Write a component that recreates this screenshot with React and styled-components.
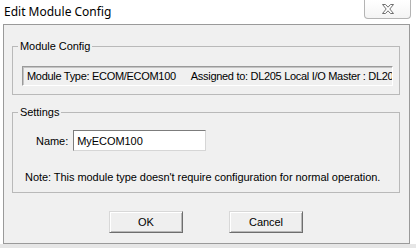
import React from "react";
import styled, { createGlobalStyle } from "styled-components";

const Global = createGlobalStyle`
  html, body {
    margin: 0;
    padding: 0;
    background: #ffffff;
  }
  * {
    box-sizing: border-box;
  }
`;

const Frame = styled.div`
  width: 416px;
  height: 248px;
  display: flex;
  flex-direction: column;
  background: #ffffff;
  border-bottom: 4px solid #e6e6e6;
  font-family: "Liberation Sans", Arial, sans-serif;
  font-size: 11px;
  letter-spacing: -0.05px;
  color: #000;
  overflow: hidden;
`;

const TitleBar = styled.div`
  height: 24px;
  flex: none;
  display: flex;
  align-items: flex-start;
  padding-left: 4px;
`;

const Title = styled.div`
  font-family: "Noto Sans", "Open Sans", sans-serif;
  font-size: 12px;
  letter-spacing: 0;
  line-height: 14px;
  padding-top: 5px;
  color: #000;
`;

const CloseButton = styled.div`
  margin-left: auto;
  margin-right: 5px;
  width: 47px;
  height: 19px;
  border: 1px solid #b4b4b4;
  border-top: none;
  border-radius: 0 0 4px 4px;
  background: linear-gradient(#ffffff, #f4f4f4);
  display: flex;
  align-items: center;
  justify-content: center;
`;

const Client = styled.div`
  flex: 1;
  margin: 0 6px 0 3px;
  background: #f0f0f0;
  border: 1px solid #9a9a9a;
  padding: 15px 9px 0 8px;
  display: flex;
  flex-direction: column;
`;

const Group = styled.fieldset`
  margin: 0 0 ${({ $gap }) => $gap || 0}px 0;
  padding: 0;
  border: 1px solid #b9b9b9;
  min-width: 0;
`;

const Legend = styled.legend`
  margin-left: 5px;
  padding: 0 2px;
  line-height: 13px;
`;

const GroupBody = styled.div`
  padding: ${({ $pad }) => $pad};
  display: flex;
  flex-direction: column;
`;

const StaticBox = styled.div`
  height: 20px;
  border: 1px solid;
  border-color: #9a9a9a #ffffff #ffffff #9a9a9a;
  box-shadow: inset 1px 1px 0 #c4c4c4;
  padding: 0 0 0 4px;
  display: flex;
  align-items: center;
  gap: 15px;
  white-space: pre;
  overflow: hidden;
  letter-spacing: -0.3px;
`;

const FieldRow = styled.div`
  display: flex;
  align-items: center;
  gap: 5px;
  padding-left: 23px;
`;

const TextInput = styled.input`
  width: 133px;
  height: 21px;
  margin: 0;
  padding: 0 0 0 3px;
  border: 1px solid;
  border-color: #7c7c7c #d6d6d6 #d6d6d6 #7c7c7c;
  background: #ffffff;
  font-family: inherit;
  font-size: 11px;
  letter-spacing: inherit;
  color: #000;
  outline: none;
`;

const Note = styled.div`
  margin-top: 20px;
  padding-left: 12px;
  line-height: 13px;
`;

const ButtonRow = styled.div`
  margin-top: 18px;
  display: flex;
  justify-content: center;
  gap: 46px;
`;

const Button = styled.button`
  width: 74px;
  height: 22px;
  margin: 0;
  padding: 0;
  background: #efefef;
  border: 1px solid;
  border-color: #d8d8d8 #6e6e6e #6e6e6e #d8d8d8;
  box-shadow: inset 1px 1px 0 #ffffff, inset -1px -1px 0 #b8b8b8;
  font-family: inherit;
  font-size: 11px;
  letter-spacing: inherit;
  color: #000;
`;

function CloseGlyph() {
  return (
    <svg width="12" height="10" viewBox="0 0 12 10">
      <path
        d="M0.5 0.5 H3.5 L6 3.2 L8.5 0.5 H11.5 L7.8 5 L11.5 9.5 H8.5 L6 6.8 L3.5 9.5 H0.5 L4.2 5 Z"
        fill="#ffffff"
        stroke="#6f6f6f"
        strokeWidth="1"
        strokeLinejoin="round"
      />
    </svg>
  );
}

export default function App() {
  return (
    <>
      <Global />
      <Frame>
        <TitleBar>
          <Title>Edit Module Config</Title>
          <CloseButton>
            <CloseGlyph />
          </CloseButton>
        </TitleBar>
        <Client>
          <Group $gap={11}>
            <Legend>Module Config</Legend>
            <GroupBody $pad="13px 6px 8px 9px">
              <StaticBox>
                <span>Module Type: ECOM/ECOM100</span>
                <span>Assigned to: DL205 Local I/O Master : DL20</span>
              </StaticBox>
            </GroupBody>
          </Group>
          <Group>
            <Legend>Settings</Legend>
            <GroupBody $pad="11px 6px 8px 0">
              <FieldRow>
                <span>Name:</span>
                <TextInput defaultValue="MyECOM100" />
              </FieldRow>
              <Note>
                Note: This module type doesn't require configuration for normal operation.
              </Note>
            </GroupBody>
          </Group>
          <ButtonRow>
            <Button>OK</Button>
            <Button>Cancel</Button>
          </ButtonRow>
        </Client>
      </Frame>
    </>
  );
}
